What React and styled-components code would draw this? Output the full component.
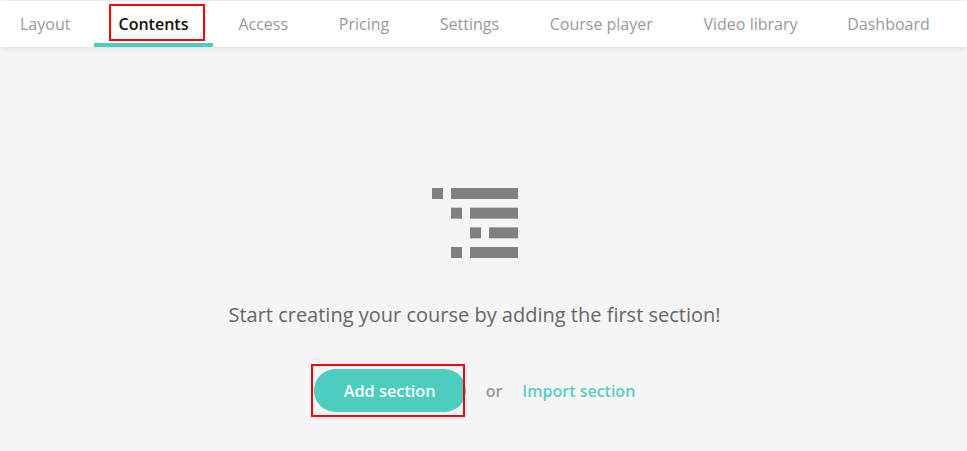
import React from 'react'
import styled, { createGlobalStyle } from 'styled-components'

const GlobalStyle = createGlobalStyle`
    html, body {
        margin: 0;
        height: 100%;
        background: #f5f5f5;
        overflow: hidden;
    }
`

const Page = styled('div')`
    height: 451px;
    display: flex;
    flex-direction: column;
    font-family: "Open Sans", "Noto Sans", sans-serif;
    background: #f5f5f5;
`

const Nav = styled('nav')`
    display: flex;
    height: 46px;
    margin-top: 1px;
    padding-left: 20px;
    background: #fff;
    box-shadow: 0 1px 6px rgba(0, 0, 0, 0.12);
`

const Tab = styled('a')`
    position: relative;
    display: flex;
    align-items: center;
    justify-content: ${p => (p.$first ? 'flex-start' : 'center')};
    flex: none;
    width: ${p => p.$width}px;
    height: 100%;
    font-size: 16px;
    font-weight: ${p => (p.$active ? 600 : 400)};
    color: ${p => (p.$active ? '#111' : '#999')};
    box-shadow: ${p => (p.$active ? 'inset 0 -4px 0 #4dcdbf' : 'none')};
`

const Mark = styled('span')`
    position: absolute;
    border: 2px solid #f00;
    box-sizing: border-box;
    pointer-events: none;
`

const TabMark = styled(Mark)`
    left: 15px;
    top: 3px;
    width: 96px;
    height: 37px;
`

const Main = styled('main')`
    flex: 1;
    display: flex;
    flex-direction: column;
    align-items: center;
    padding: 141px 18px 0 0;
`

const Prompt = styled('p')`
    margin: 43px 0 0;
    font-size: 20px;
    line-height: 27px;
    color: #666;
`

const Actions = styled('div')`
    display: flex;
    align-items: center;
    margin-top: 41px;
`

const AddButton = styled('button')`
    position: relative;
    width: 152px;
    height: 43px;
    padding: 1px 0 0;
    border: none;
    border-radius: 22px;
    background: #4dcdbf;
    color: #fff;
    font-family: inherit;
    font-size: 16.3px;
    font-weight: 600;
`

const ButtonMark = styled(Mark)`
    left: -3px;
    top: -5px;
    width: 154px;
    height: 53px;
`

const Or = styled('span')`
    margin-left: 20px;
    padding-top: 1px;
    font-size: 16px;
    font-weight: 600;
    color: #999;
`

const ImportLink = styled('a')`
    margin-left: 20px;
    padding-top: 1px;
    font-size: 16px;
    font-weight: 600;
    color: #5ccfc4;
`

const rows = [
    [0, 11, 19, 67],
    [19, 30, 38, 67],
    [38, 49, 57, 67],
    [19, 30, 38, 67],
]

function OutlineIcon () {
    return (
        <svg width="86" height="70" viewBox="0 0 86 70" fill="#808080">
            {rows.map(([a, b, c], i) => (
                <g key={i}>
                    <rect x={a} y={i * 19.67} width={b - a} height="11" />
                    <rect x={c} y={i * 19.67} width={86 - c} height="11" />
                </g>
            ))}
        </svg>
    )
}

const tabs = [
    { label: 'Layout', width: 74 },
    { label: 'Contents', width: 119 },
    { label: 'Access', width: 100.5 },
    { label: 'Pricing', width: 101 },
    { label: 'Settings', width: 110 },
    { label: 'Course player', width: 153.5 },
    { label: 'Video library', width: 145 },
    { label: 'Dashboard', width: 131 },
]

function App () {
    return (
        <Page>
            <GlobalStyle />
            <Nav>
                {tabs.map((t, i) => (
                    <Tab key={t.label} $first={i === 0} $width={t.width} $active={t.label === 'Contents'}>
                        {t.label}
                        {t.label === 'Contents' && <TabMark />}
                    </Tab>
                ))}
            </Nav>
            <Main>
                <OutlineIcon />
                <Prompt>Start creating your course by adding the first section!</Prompt>
                <Actions>
                    <AddButton>
                        Add section
                        <ButtonMark />
                    </AddButton>
                    <Or>or</Or>
                    <ImportLink>Import section</ImportLink>
                </Actions>
            </Main>
        </Page>
    )
}

export default App
